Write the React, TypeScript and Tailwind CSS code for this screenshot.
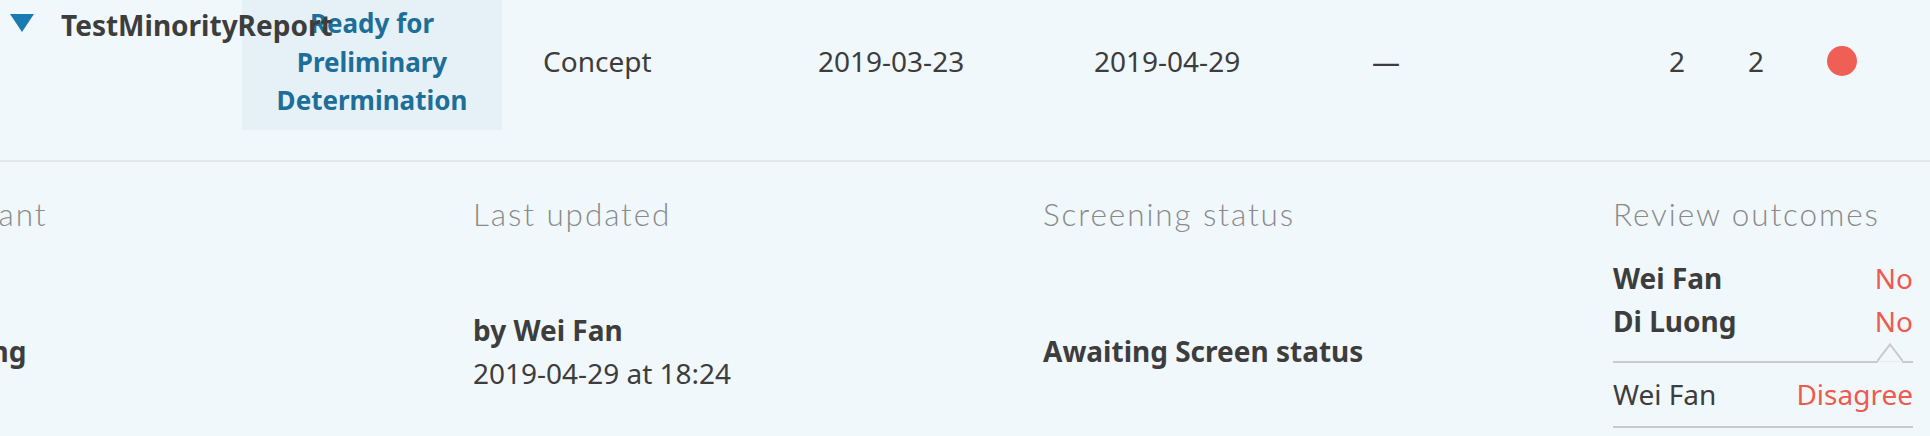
export default function App() {
  return (
    <main className="w-[1930px] h-[436px] overflow-hidden bg-[#f1f8fb] text-[#3d3d3d] font-['Noto_Sans',sans-serif] text-[28px] leading-[43px]">
      {/* SUBMISSION ROW */}
      <section className="flex items-start h-[162px] border-b-2 border-[#e3e7ea]">
        <div className="w-[61px] shrink-0 pl-[10px] pt-[14px]">
          <svg width="24" height="18" viewBox="0 0 24 18">
            <path d="M0 0h24L12 18z" fill="#1a7bb3" />
          </svg>
        </div>
        <div className="relative z-10 w-[181px] shrink-0 pt-[4px] font-bold whitespace-nowrap">
          TestMinorityReport
        </div>
        <div className="w-[260px] h-[130px] shrink-0 bg-[#e5f1f6] pt-[4px] text-center font-bold text-[26px] text-[#1d6e98] leading-[38.5px]">
          Ready for
          <br />
          Preliminary
          <br />
          Determination
        </div>
        <div className="flex h-[122px] items-center pl-[41px] whitespace-nowrap">
          <div className="w-[275px]">Concept</div>
          <div className="w-[276px]">2019-03-23</div>
          <div className="w-[278px]">2019-04-29</div>
          <div className="w-[297px]">—</div>
          <div className="w-[79px]">2</div>
          <div className="w-[79px]">2</div>
          <div className="w-[30px] h-[30px] rounded-full bg-[#ef5f55]" />
        </div>
      </section>

      {/* DETAILS */}
      <section className="flex ml-[-97px] whitespace-nowrap">
        {[
          { h: "Applicant", v: ["Di Luong"] },
          { h: "Last updated", v: ["by Wei Fan", "2019-04-29 at 18:24"] },
          { h: "Screening status", v: ["Awaiting Screen status"] },
        ].map((c) => (
          <div key={c.h} className="w-[570px] shrink-0 flex flex-col">
            <h4 className="pt-[32px] font-['Lato',sans-serif] font-light text-[31.5px] leading-[40px] tracking-[1.9px] text-[#8a8a8a]">
              {c.h}
            </h4>
            <div className="h-[235px] flex flex-col justify-center">
              {c.v.map((t, i) => (
                <p key={t} className={i === 0 ? "font-bold" : ""}>
                  {t}
                </p>
              ))}
            </div>
          </div>
        ))}

        <div className="w-[300px] shrink-0">
          <h4 className="pt-[32px] font-['Lato',sans-serif] font-light text-[31.5px] leading-[40px] tracking-[1.9px] text-[#8a8a8a]">
            Review outcomes
          </h4>
          <div className="mt-[23px]">
            <div className="flex justify-between">
              <span className="font-bold">Wei Fan</span>
              <span className="text-[#ee5a4f]">No</span>
            </div>
            <div className="flex justify-between">
              <span className="font-bold">Di Luong</span>
              <span className="text-[#ee5a4f]">No</span>
            </div>
            <div className="relative mt-[18px] border-b-2 border-[#c9cacc]">
              <svg className="absolute right-[10px] bottom-[-2px]" width="26" height="20" viewBox="0 0 26 20">
                <path d="M0 18.5L13 1.5L26 18.5" fill="#f1f8fb" stroke="#c9cacc" strokeWidth="2" />
                <path d="M1 19.5H25" stroke="#f1f8fb" strokeWidth="2" />
              </svg>
            </div>
            <div className="flex justify-between pt-[10px] pb-[10px] border-b-2 border-[#c9cacc]">
              <span>Wei Fan</span>
              <span className="text-[#ee5a4f]">Disagree</span>
            </div>
          </div>
        </div>
      </section>
    </main>
  );
}
